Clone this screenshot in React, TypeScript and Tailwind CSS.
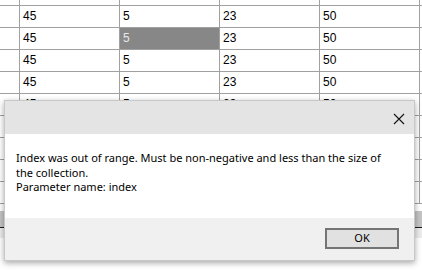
import React from "react";

type Row = {
  cells: string[];
  selected?: number;
};

const rows: Row[] = [
  { cells: ["", "", "", ""] },
  { cells: ["45", "5", "23", "50"] },
  { cells: ["45", "5", "23", "50"], selected: 1 },
  { cells: ["45", "5", "23", "50"] },
  { cells: ["45", "5", "23", "50"] },
  { cells: ["45", "5", "23", "50"] },
  { cells: ["45", "5", "23", "50"] },
  { cells: ["45", "5", "23", "50"] },
  { cells: ["45", "5", "23", "50"] },
  { cells: ["45", "5", "23", "50"] },
];

function GridRow({ row }: { row: Row }) {
  return (
    <div className="flex h-[22px] border-b border-[#a0a0a0]">
      <div className="w-[20px] shrink-0 border-r border-[#a0a0a0]" />
      {row.cells.map((c, i) => (
        <div
          key={i}
          className={
            row.selected === i
              ? "w-[100px] shrink-0 border-r border-[#a0a0a0] bg-[#878787] pl-[3px] leading-[21px] text-[#e8e8e8]"
              : "w-[100px] shrink-0 border-r border-[#a0a0a0] pl-[3px] leading-[21px] text-black"
          }
        >
          {c}
        </div>
      ))}
      <div className="flex-1" />
    </div>
  );
}

export default function App() {
  return (
    <div className="relative h-[270px] w-[422px] overflow-hidden bg-white font-['Liberation_Sans',Arial,sans-serif] text-[12px]">
      <div className="mt-[-16px] flex flex-col">
        {rows.map((r, i) => (
          <GridRow key={i} row={r} />
        ))}
        <div className="h-[7px]" />
        <div className="h-[16px] bg-[#c4c4c4]" />
        <div className="h-px bg-[#1a1a1a]" />
        <div className="h-[10px] bg-[#ececec]" />
      </div>

      <div className="absolute left-[4px] top-[100px] flex h-[161px] w-[411px] flex-col border border-[#c8c8c8] shadow-[0_2px_6px_rgba(0,0,0,0.35)] font-['Noto_Sans','Open_Sans',sans-serif]">
        <div className="flex h-[33px] items-center justify-end bg-[#e4e4e4] pr-[9px]">
          <svg width="12" height="12" viewBox="0 0 12 12" className="mt-[2px]">
            <path d="M1 1 L11 11 M11 1 L1 11" stroke="#111" strokeWidth="1.1" fill="none" />
          </svg>
        </div>
        <div className="h-[84px] bg-white pl-[11px] pt-[17px] text-[11px] leading-[14.5px] text-black">
          <div className="whitespace-nowrap">
            Index was out of range. Must be non-negative and less than the size of
          </div>
          <div className="whitespace-nowrap">the collection.</div>
          <div className="whitespace-nowrap">Parameter name: index</div>
        </div>
        <div className="flex flex-1 items-start justify-end bg-[#f0f0f0] pr-[15px] pt-[10px]">
          <button className="flex h-[21px] w-[74px] items-center justify-center border-2 border-[#747474] bg-[#e1e1e1] text-[11px] text-black">
            OK
          </button>
        </div>
      </div>
    </div>
  );
}
